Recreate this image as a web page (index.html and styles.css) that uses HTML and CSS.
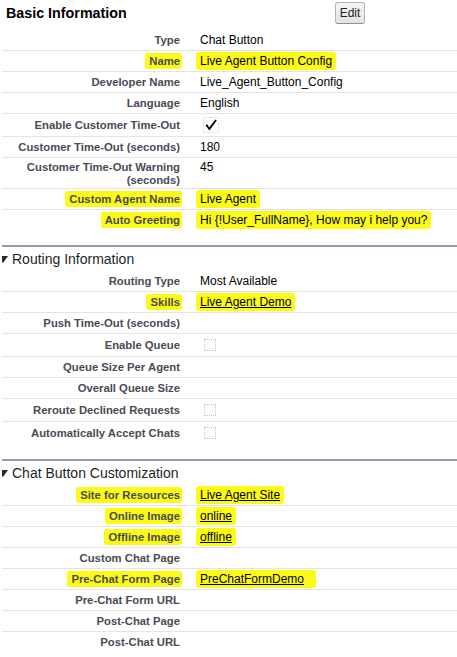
FILE: index.html
```html
<!DOCTYPE html>
<html>
<head>
<meta charset="utf-8">
<link rel="stylesheet" href="styles.css">
</head>
<body>
<div class="page">
  <div class="pb-header">
    <h2 class="pb-title">Basic Information</h2>
    <button class="btn">Edit</button>
  </div>
  <div class="rows">
    <div class="row"><div class="lbl">Type</div><div class="val">Chat Button</div></div>
    <div class="row"><div class="lbl"><span class="hl hl-l">Name</span></div><div class="val"><span class="hl hl-v">Live Agent Button Config</span></div></div>
    <div class="row"><div class="lbl">Developer Name</div><div class="val">Live_Agent_Button_Config</div></div>
    <div class="row"><div class="lbl">Language</div><div class="val">English</div></div>
    <div class="row cb-row"><div class="lbl">Enable Customer Time-Out</div><div class="val">
      <svg class="cb" width="16" height="16" viewBox="0 0 16 16"><rect x="0.5" y="0.5" width="15" height="15" fill="none" stroke="#d6d6d6" stroke-dasharray="1 1"/><path d="M2.5 8.2 L4.2 7.2 L6.2 10.4 L12.4 2.4 L13.8 3.4 L6.4 13.6 Z" fill="#000"/></svg>
    </div></div>
    <div class="row"><div class="lbl">Customer Time-Out (seconds)</div><div class="val">180</div></div>
    <div class="row tight"><div class="lbl">Customer Time-Out Warning (seconds)</div><div class="val">45</div></div>
    <div class="row"><div class="lbl"><span class="hl hl-l">Custom Agent Name</span></div><div class="val"><span class="hl hl-v">Live Agent</span></div></div>
    <div class="row last"><div class="lbl"><span class="hl hl-l">Auto Greeting</span></div><div class="val"><span class="hl hl-v">Hi {!User_FullName}, How may i help you?</span></div></div>
  </div>

  <div class="section">
    <div class="sec-header">
      <svg class="twisty" width="6" height="7" viewBox="0 0 6 7"><polygon points="0,0 6,0 1,7 0,6" fill="#2a2a2a"/></svg>
      <h3 class="sec-title">Routing Information</h3>
    </div>
    <div class="rows">
      <div class="row"><div class="lbl">Routing Type</div><div class="val">Most Available</div></div>
      <div class="row"><div class="lbl"><span class="hl hl-l">Skills</span></div><div class="val"><span class="hl hl-v"><a class="lnk">Live Agent Demo</a></span></div></div>
      <div class="row"><div class="lbl">Push Time-Out (seconds)</div><div class="val"></div></div>
      <div class="row cb-row"><div class="lbl">Enable Queue</div><div class="val"><span class="box"></span></div></div>
      <div class="row"><div class="lbl">Queue Size Per Agent</div><div class="val"></div></div>
      <div class="row"><div class="lbl">Overall Queue Size</div><div class="val"></div></div>
      <div class="row cb-row"><div class="lbl">Reroute Declined Requests</div><div class="val"><span class="box"></span></div></div>
      <div class="row cb-row last"><div class="lbl">Automatically Accept Chats</div><div class="val"><span class="box"></span></div></div>
    </div>
  </div>

  <div class="section">
    <div class="sec-header">
      <svg class="twisty" width="6" height="7" viewBox="0 0 6 7"><polygon points="0,0 6,0 1,7 0,6" fill="#2a2a2a"/></svg>
      <h3 class="sec-title">Chat Button Customization</h3>
    </div>
    <div class="rows">
      <div class="row"><div class="lbl"><span class="hl hl-l">Site for Resources</span></div><div class="val"><span class="hl hl-v"><a class="lnk">Live Agent Site</a></span></div></div>
      <div class="row"><div class="lbl"><span class="hl hl-l">Online Image</span></div><div class="val"><span class="hl hl-v"><a class="lnk">online</a></span></div></div>
      <div class="row"><div class="lbl"><span class="hl hl-l">Offline Image</span></div><div class="val"><span class="hl hl-v"><a class="lnk">offline</a></span></div></div>
      <div class="row"><div class="lbl">Custom Chat Page</div><div class="val"></div></div>
      <div class="row"><div class="lbl"><span class="hl hl-l">Pre-Chat Form Page</span></div><div class="val"><span class="hl hl-v hl-wide"><a class="lnk">PreChatFormDemo</a></span></div></div>
      <div class="row"><div class="lbl">Pre-Chat Form URL</div><div class="val"></div></div>
      <div class="row"><div class="lbl">Post-Chat Page</div><div class="val"></div></div>
      <div class="row last"><div class="lbl">Post-Chat URL</div><div class="val"></div></div>
    </div>
  </div>
</div>
</body>
</html>
```

FILE: styles.css
```css
html, body {
  margin: 0;
  padding: 0;
  background: #ffffff;
}

body {
  font-family: "Liberation Sans", Arial, sans-serif;
  color: #000;
}

.page {
  padding-left: 2px;
  width: 455px;
}

.pb-header {
  display: flex;
  align-items: center;
  height: 26px;
  padding-left: 4px;
}

.pb-title {
  margin: 0;
  font-size: 14.3px;
  font-weight: bold;
  color: #000;
}

.btn {
  margin-left: auto;
  margin-right: 92px;
  width: 30px;
  height: 22px;
  padding: 0;
  font-family: "Liberation Sans", Arial, sans-serif;
  font-size: 12px;
  font-weight: normal;
  color: #222;
  border: 1px solid #b5b5b5;
  border-bottom-color: #8f8f8f;
  border-radius: 3px;
  background: linear-gradient(#f6f6f6, #e2e2e2);
}

.rows {
  margin-top: 4px;
}

.section .rows {
  margin-top: 0;
}

.row {
  display: grid;
  grid-template-columns: 178px 1fr;
  column-gap: 20px;
  padding: 4px 0 3px;
  border-bottom: 1px solid #e4e4e4;
  line-height: 13px;
}

.row.tight {
  padding: 3px 0 2px;
}

.row.tight .lbl {
  line-height: 12.5px;
}

.row.cb-row {
  padding: 5px 0 4px;
}

.row.last {
  border-bottom: none;
}

.lbl {
  text-align: right;
  font-size: 11.3px;
  font-weight: bold;
  color: #4a4a56;
}

.val {
  display: block;
  font-size: 12px;
  color: #000;
  min-height: 13px;
}

.hl {
  background: #fbfb17;
  border-radius: 3px;
  padding: 2px 0;
}

.hl-l {
  padding-left: 4px;
  padding-right: 2px;
  margin-right: -2px;
}

.hl-v {
  padding-left: 4px;
  padding-right: 4px;
  margin-left: -4px;
}

.hl-wide {
  padding-right: 12px;
}

.lnk {
  color: #000;
  text-decoration: underline;
}

.cb {
  display: block;
  margin: -2px 0 -1px 3px;
}

.box {
  display: block;
  width: 10px;
  height: 10px;
  margin: 0 0 1px 4px;
  border: 1px dotted #c4c4c4;
}

.section {
  margin-top: 15px;
  border-top: 2px solid #8e9bb1;
}

.sec-header {
  display: flex;
  align-items: center;
  height: 24px;
}

.twisty {
  margin-left: 0;
  margin-right: 4px;
}

.sec-title {
  margin: 0;
  font-size: 14px;
  font-weight: normal;
  color: #1f1f1f;
}
```
